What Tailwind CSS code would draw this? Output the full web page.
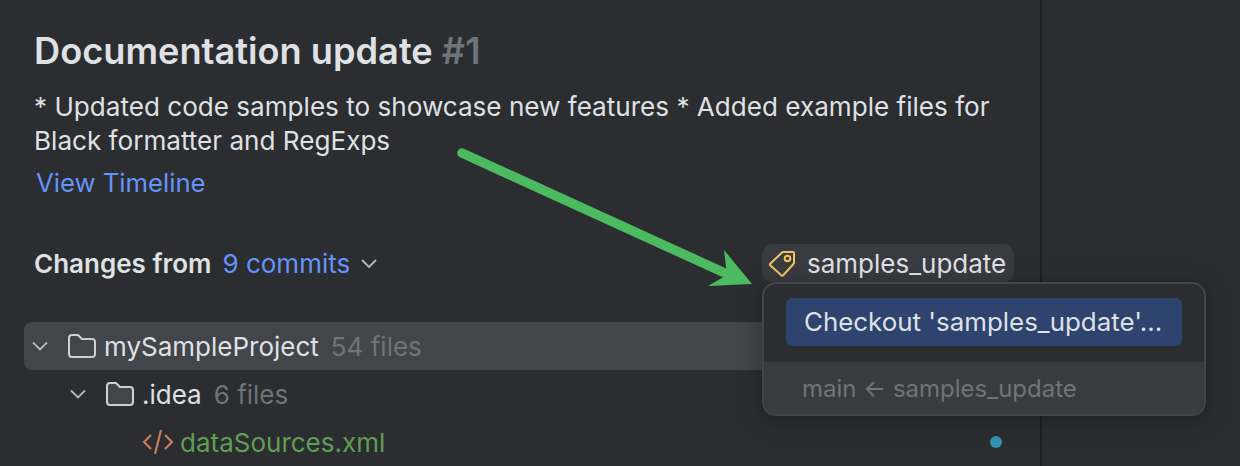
<!DOCTYPE html>
<html lang="en">
<head>
    <meta charset="UTF-8">
    <title>Documentation update #1</title>
    <script src="https://cdn.jsdelivr.net/npm/@tailwindcss/browser@4"></script>
</head>
<body class="bg-[#2b2d30] font-['Inter',sans-serif] overflow-hidden">
    <div class="relative w-[1240px] h-[466px] overflow-hidden flex">

        <!-- Main pane -->
        <div class="w-[1042px] h-full border-r-2 border-[#1e1f22] shrink-0">
            <div class="pl-[34px] pr-[30px] pt-[30px]">
                <h1 class="text-[36.2px] leading-[42px] font-semibold text-[#dfe1e5]">Documentation update <span class="text-[#6f737a]">#1</span></h1>
                <p class="mt-[18px] w-[970px] text-[26.1px] leading-[34px] text-[#dfe1e5]">* Updated code samples to showcase new features * Added example files for Black formatter and RegExps</p>
                <a href="#" class="block mt-[6px] ml-[2px] text-[25.7px] leading-[38px] text-[#6394f8]">View Timeline</a>
            </div>

            <!-- Changes row -->
            <div class="mt-[42px] pl-[34px] pr-[26px] flex items-center justify-between h-[38px]">
                <div class="flex items-center text-[26px]">
                    <span class="font-semibold text-[#dfe1e5]">Changes from</span>
                    <span class="ml-[11px] text-[#6394f8]">9 commits</span>
                    <svg class="ml-[10px]" width="18" height="18" viewBox="0 0 18 18" fill="none" stroke="#b4b8bf" stroke-width="1.8"><path d="M2 6l7 7 7-7"/></svg>
                </div>
                <div class="h-[38px] w-[252px] rounded-[10px] bg-[#393b40] flex items-center pl-[6px]">
                    <svg width="28" height="28" viewBox="0 0 28 28" fill="none" stroke="#f2c55c" stroke-width="2" stroke-linejoin="round"><path d="M2 15L14 3.5a2 2 0 011.5-.5H25a1 1 0 011 1v9.5a2 2 0 01-.6 1.5L15 26.500a1 1 0 01-1.500 0L2 16a.7.7 0 010-1z"/><circle cx="19.500" cy="9.500" r="2.800"/></svg>
                    <span class="ml-[11px] text-[26px] text-[#dfe1e5]">samples_update</span>
                </div>
            </div>

            <!-- File tree -->
            <div class="mt-[40px] pl-[24px] pr-[24px]">
                <div class="h-[48px] rounded-l-[8px] bg-[#43454a] flex items-center pl-[8px]">
                    <svg width="16" height="16" viewBox="0 0 16 16" fill="none" stroke="#b4b8bf" stroke-width="1.8"><path d="M1 4.5l7 7 7-7"/></svg>
                    <svg class="ml-[20px]" width="28" height="24" viewBox="0 0 28 24" fill="none" stroke="#ced0d6" stroke-width="2"><path d="M1 4a3 3 0 013-3h6l4 4h10a3 3 0 013 3v12a3 3 0 01-3 3H4a3 3 0 01-3-3z"/></svg>
                    <span class="ml-[8px] text-[26px] text-[#dfe1e5]">mySampleProject</span>
                    <span class="ml-[12px] text-[26px] text-[#6f737a]">54 files</span>
                </div>
                <div class="h-[48px] flex items-center pl-[46px]">
                    <svg width="16" height="16" viewBox="0 0 16 16" fill="none" stroke="#b4b8bf" stroke-width="1.8"><path d="M1 4.5l7 7 7-7"/></svg>
                    <svg class="ml-[20px]" width="28" height="24" viewBox="0 0 28 24" fill="#43454a" stroke="#ced0d6" stroke-width="2"><path d="M1 4a3 3 0 013-3h6l4 4h10a3 3 0 013 3v12a3 3 0 01-3 3H4a3 3 0 01-3-3z"/></svg>
                    <span class="ml-[8px] text-[26px] text-[#dfe1e5]">.idea</span>
                    <span class="ml-[12px] text-[26px] text-[#6f737a]">6 files</span>
                </div>
                <div class="h-[48px] flex items-center pl-[118px] pr-[14px]">
                    <svg width="32" height="26" viewBox="0 0 32 26" fill="none" stroke="#c77d55" stroke-width="2.200"><path d="M9 6L2 13l7 7M23 6l7 7-7 7M19 1l-6 24"/></svg>
                    <span class="ml-[6px] text-[26px] text-[#5f9e54]">dataSources.xml</span>
                    <span class="ml-auto w-[12px] h-[12px] rounded-full bg-[#3592b4]"></span>
                </div>
            </div>
        </div>

        <!-- Right pane is empty -->
        <div class="flex-1"></div>

        <!-- Checkout popup -->
        <div class="absolute left-[762px] top-[282px] w-[444px] h-[134px] rounded-[14px] border-2 border-[#43454a] bg-[#2b2d30] overflow-hidden shadow-[0_4px_24px_rgba(0,0,0,0.3)] flex flex-col">
            <div class="h-[78px] pt-[14px] px-[22px] shrink-0">
                <div class="h-[48px] rounded-[6px] bg-[#2e436e] flex items-center pl-[18px] text-[25.900px] text-[#dfe1e5] whitespace-nowrap">Checkout 'samples_update'...</div>
            </div>
            <div class="flex-1 bg-[#393b40] flex items-center pl-[38px] pt-[2px] text-[24px] text-[#6f737a] whitespace-nowrap">main ← samples_update</div>
        </div>

        <!-- Annotation arrow -->
        <svg class="absolute left-0 top-0 pointer-events-none" width="1240" height="466" viewBox="0 0 1240 466" fill="none">
            <path d="M462 153L727 274" stroke="#4cbb5f" stroke-width="9.5" stroke-linecap="round"/>
            <path d="M724 250L752 284L708 286L727 275z" fill="#4cbb5f"/>
        </svg>
    </div>
</body>
</html>
